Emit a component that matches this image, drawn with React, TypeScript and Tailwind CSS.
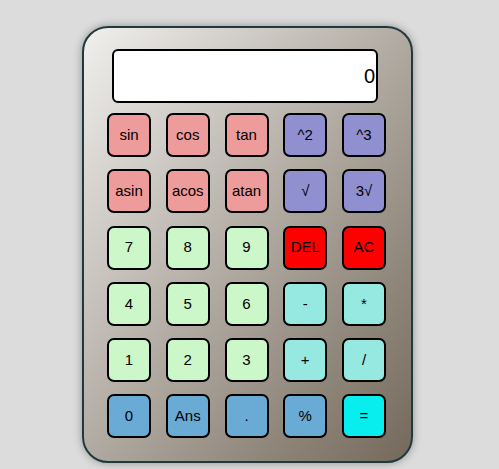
const keys: { label: string; color: string }[] = [
  { label: 'sin', color: 'bg-[#ee9b9b]' },
  { label: 'cos', color: 'bg-[#ee9b9b]' },
  { label: 'tan', color: 'bg-[#ee9b9b]' },
  { label: '^2', color: 'bg-[#908fcf]' },
  { label: '^3', color: 'bg-[#908fcf]' },
  { label: 'asin', color: 'bg-[#ee9b9b]' },
  { label: 'acos', color: 'bg-[#ee9b9b]' },
  { label: 'atan', color: 'bg-[#ee9b9b]' },
  { label: '√', color: 'bg-[#908fcf]' },
  { label: '3√', color: 'bg-[#908fcf]' },
  { label: '7', color: 'bg-[#ccf7c9]' },
  { label: '8', color: 'bg-[#ccf7c9]' },
  { label: '9', color: 'bg-[#ccf7c9]' },
  { label: 'DEL', color: 'bg-[#ff0000]' },
  { label: 'AC', color: 'bg-[#ff0000]' },
  { label: '4', color: 'bg-[#ccf7c9]' },
  { label: '5', color: 'bg-[#ccf7c9]' },
  { label: '6', color: 'bg-[#ccf7c9]' },
  { label: '-', color: 'bg-[#96e9e0]' },
  { label: '*', color: 'bg-[#96e9e0]' },
  { label: '1', color: 'bg-[#ccf7c9]' },
  { label: '2', color: 'bg-[#ccf7c9]' },
  { label: '3', color: 'bg-[#ccf7c9]' },
  { label: '+', color: 'bg-[#96e9e0]' },
  { label: '/', color: 'bg-[#96e9e0]' },
  { label: '0', color: 'bg-[#6aabd6]' },
  { label: 'Ans', color: 'bg-[#6aabd6]' },
  { label: '.', color: 'bg-[#6aabd6]' },
  { label: '%', color: 'bg-[#6aabd6]' },
  { label: '=', color: 'bg-[#08eeee]' },
];

export default function App() {
  return (
    <div className="min-h-[469px] w-full bg-[#dcdcdc] pt-[26px] font-['Liberation_Sans',Arial,sans-serif]">
      <div className="ml-[82px] w-[331px] h-[437px] rounded-[26px] border-2 border-[#1e3a3c] bg-linear-to-br from-[#f1f0ee] to-[#74695b] shadow-[0_0_9px_rgba(0,0,0,0.35)] pl-[23px] pt-[21px]">
        {/* display */}
        <div className="ml-[5px] w-[266px] h-[54px] rounded-[6px] border-2 border-black bg-white flex items-center justify-end pr-[1px] text-[20px] text-black">
          0
        </div>

        {/* keypad */}
        <div className="mt-[10px] grid grid-cols-[repeat(5,44px)] gap-x-[14.75px] gap-y-[12.25px]">
          {keys.map((k) => (
            <button
              key={k.label}
              className={`${k.color} h-[44px] w-[44px] rounded-[7px] border-2 border-black text-[15px] text-black flex items-center justify-center`}
            >
              {k.label}
            </button>
          ))}
        </div>
      </div>
    </div>
  );
}
